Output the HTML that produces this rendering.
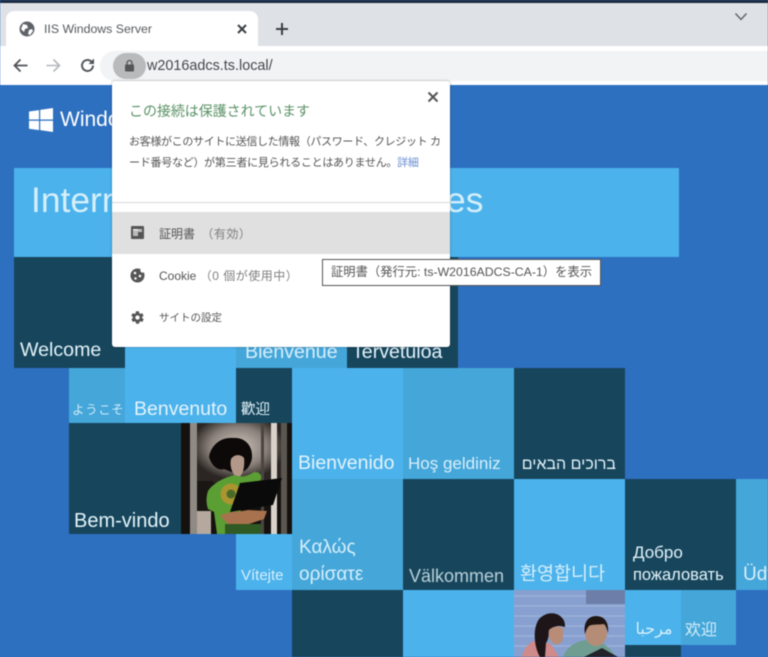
<!DOCTYPE html>
<html lang="ja"><head><meta charset="utf-8"><title>IIS Windows Server</title>
<style>
html,body{margin:0;padding:0;width:768px;height:657px;overflow:hidden;background:#2e70c0}
#r{position:relative;width:768px;height:657px;overflow:hidden;filter:blur(.55px);font-family:"Liberation Sans","Noto Sans CJK JP",sans-serif}
#r div,#r svg{position:absolute}
.t{white-space:nowrap}
.l{background:#4bb2ec}.m{background:#45a6d9}.d{background:#17465c}
.w{white-space:nowrap;color:#e4f3fa;line-height:1}
.j{color:#555;font-size:11.500px;white-space:nowrap;line-height:1}
.j span{color:#808080}
</style></head><body><div id="r">
<!-- tiles -->
<div class="l" style="left:14px;top:168px;width:665px;height:89px"></div>
<div class="w" style="left:31px;top:183px;font-size:35.400px;color:#d6effb">Internet Information Services</div>
<div class="d" style="left:14px;top:257px;width:111px;height:111px"></div>
<div class="l" style="left:125px;top:257px;width:111px;height:111px"></div>
<div class="m" style="left:236px;top:257px;width:111px;height:111px"></div>
<div class="d" style="left:347px;top:257px;width:111px;height:111px"></div>
<div class="w" style="left:20px;top:341px;font-size:19.600px">Welcome</div>
<div class="w" style="left:245px;top:343px;font-size:19.600px;color:#d6effb">Bienvenue</div>
<div class="w" style="left:352px;top:343px;font-size:19.600px">Tervetuloa</div>

<div class="m" style="left:69px;top:368px;width:56px;height:55px"></div>
<div class="l" style="left:125px;top:368px;width:111px;height:55px"></div>
<div class="d" style="left:236px;top:368px;width:56px;height:55px"></div>
<div class="l" style="left:292px;top:368px;width:111px;height:111px"></div>
<div class="m" style="left:403px;top:368px;width:111px;height:111px"></div>
<div class="d" style="left:514px;top:368px;width:111px;height:111px"></div>
<div class="w" style="left:72px;top:404px;font-size:12.500px;letter-spacing:.6px;color:#cdebfa">ようこそ</div>
<div class="w" style="left:134px;top:400px;font-size:19.500px">Benvenuto</div>
<div class="w" style="left:241px;top:403px;font-size:14.500px">歡迎</div>
<div class="w" style="left:298px;top:454px;font-size:19.500px">Bienvenido</div>
<div class="w" style="left:408px;top:455px;font-size:17px;color:#d6effb">Hoş geldiniz</div>
<div class="w" style="left:522px;top:457px;font-size:16px;direction:rtl;width:94px;text-align:right">ברוכים הבאים</div>

<div class="d" style="left:69px;top:423px;width:112px;height:111px"></div>
<div class="w" style="left:74px;top:511px;font-size:20px">Bem-vindo</div>
<svg style="left:181px;top:423px" width="111" height="111" viewBox="0 0 111 111">
<defs><radialGradient id="g" cx=".5" cy=".4" r=".55"><stop offset="0" stop-color="#cfc6be"/><stop offset=".6" stop-color="#8a817a"/><stop offset="1" stop-color="#2b2623"/></radialGradient></defs>
<rect width="111" height="111" fill="#15110f"/>
<rect x="14" width="86" height="60" fill="url(#g)"/>
<rect x="9" width="7" height="111" fill="#8f8a84"/>
<rect x="90" y="0" width="6" height="111" fill="#d8d2ca"/>
<rect x="80" y="0" width="3" height="111" fill="#4a4541"/>
<rect x="100" y="0" width="6" height="111" fill="#5c5650"/>
<rect x="16" y="58" width="16" height="30" fill="#1a1614"/>
<rect x="16" y="88" width="14" height="23" fill="#b5a99f"/>
<path d="M28 34c2-12 12-20 24-19 12-1 20 8 19 20-1 6-4 11-8 13l-10 2-10-4c-5 2-12-2-15-12z" fill="#0c0908"/>
<path d="M50 36c4-6 11-4 13-1 1 8-1 17-5 19-5 1-10-9-8-18z" fill="#b39889"/>
<path d="M27 68c6-9 18-14 27-16 7 3 13 1 19-3 6 0 8 3 7 7l-3 8-22 30 2 17H36l-3-22-6-3c-2-6-2-12 0-18z" fill="#5b9e33"/>
<circle cx="50" cy="71" r="10.500" fill="#ab9530"/><circle cx="50" cy="71" r="4.500" fill="#4a6b28"/>
<path d="M59 60l42-5-9 27-43 7z" fill="#0a0a0a"/>
<path d="M39 93c8-5 20-4 28-6l19 1-3 8-18 6-18-1z" fill="#a8724e"/>
<rect x="44" y="101" width="36" height="10" fill="#2f5a24"/>
</svg>

<div class="m" style="left:292px;top:479px;width:111px;height:111px"></div>
<div class="w" style="left:299px;top:538px;font-size:19px;color:#d6effb">Καλώς</div>
<div class="w" style="left:299px;top:565px;font-size:19px;color:#d6effb">ορίσατε</div>
<div class="l" style="left:236px;top:534px;width:56px;height:56px"></div>
<div class="w" style="left:241px;top:568px;font-size:15px;color:#d6effb">Vítejte</div>
<div class="d" style="left:403px;top:479px;width:111px;height:111px"></div>
<div class="w" style="left:409px;top:567px;font-size:18px;color:#b9d0da">Välkommen</div>
<div class="l" style="left:514px;top:479px;width:111px;height:111px"></div>
<div class="w" style="left:520px;top:565px;font-size:18.500px;color:#d6effb">환영합니다</div>
<div class="d" style="left:625px;top:479px;width:111px;height:111px"></div>
<div class="w" style="left:633px;top:544px;font-size:17px">Добро</div>
<div class="w" style="left:633px;top:567px;font-size:16.500px">пожаловать</div>
<div class="m" style="left:736px;top:479px;width:32px;height:111px"></div>
<div class="w" style="left:743px;top:565px;font-size:19px;color:#d6effb">Üdvözöljük</div>

<div class="d" style="left:292px;top:590px;width:111px;height:67px"></div>
<div class="l" style="left:403px;top:590px;width:111px;height:67px"></div>
<svg style="left:514px;top:590px" width="111" height="67" viewBox="0 0 111 67">
<rect width="111" height="67" fill="#87a0d0"/>
<path d="M0 6h111M0 16h111M0 26h111M0 36h111M0 46h111M0 56h111" stroke="#9db1d8" stroke-width="1.500"/>
<rect x="72" y="0" width="39" height="14" fill="#6d7fa8"/>
<path d="M8 67c2-10 8-15 15-17l14 4 8 13z" fill="#cf8a8a"/>
<path d="M26 67c-6-10-8-30 0-39 8-7 18-6 23 1 2 3 2 6 2 8-6-2-11-1-14 2-3 5-2 10-5 14l-1 14z" fill="#1d1517"/>
<path d="M35 40c4-4 10-4 14-2 1 7 0 15-4 16-6 2-12-5-10-14z" fill="#b98c78"/>
<path d="M49 67c3-9 12-16 24-17 14 0 24 7 28 17z" fill="#6f9e90"/>
<path d="M70 67l18-9 16 9z" fill="#23232b"/>
<ellipse cx="82" cy="43" rx="11" ry="13" fill="#b58d76"/>
<path d="M71 44c-2-11 3-18 11-18 9 0 13 7 12 17-1-4-2-7-4-9-6 1-12 0-15 2-2 2-3 5-4 8z" fill="#1f1613"/>
</svg>
<div class="l" style="left:625px;top:590px;width:56px;height:55px"></div>
<div class="m" style="left:681px;top:590px;width:55px;height:55px"></div>
<div class="w" style="left:631px;top:622px;font-size:16px;width:46px;text-align:center;color:#d6effb">مرحبا</div>
<div class="w" style="left:685px;top:623px;font-size:16px;color:#d6effb">欢迎</div>
<div class="d" style="left:625px;top:645px;width:56px;height:12px"></div>

<!-- windows logo -->
<svg style="left:28px;top:107px" width="26" height="26" viewBox="0 0 26 26"><path d="M1 4.500l10-1.400v9.400H1zM12.200 2.900L25 1v11.500H12.200zM1 13.700h10v9.400L1 21.700zM12.200 13.700H25V25l-12.800-1.900z" fill="#fff"/></svg>
<div class="w" style="left:60px;top:109px;font-size:21px;color:#fff">Windows Server</div>

<!-- chrome -->
<div style="left:0;top:0;width:768px;height:46px;background:#dee1e6"></div>
<div style="left:0;top:0;width:768px;height:3px;background:#1c2a3f"></div>
<div style="left:6px;top:11px;width:252px;height:36px;background:#fff;border-radius:8px 8px 0 0"></div>
<svg style="left:19px;top:21px" width="16" height="16" viewBox="0 0 16 16"><circle cx="8" cy="8" r="7.500" fill="#5f6368"/><path d="M4 3l4 1 1 3-3 1-1 3-3-3zM10 9l3-1 1 2-3 4-2-1z" fill="#fff"/></svg>
<div class="t" style="left:44px;top:22px;font-size:12.300px;line-height:15px;color:#55585c">IIS Windows Server</div>
<svg style="left:236px;top:23px" width="12" height="12" viewBox="0 0 12 12"><path d="M2 2l8 8M10 2l-8 8" stroke="#3c4043" stroke-width="2"/></svg>
<svg style="left:275px;top:22px" width="14" height="14" viewBox="0 0 14 14"><path d="M7 1v12M1 7h12" stroke="#3c4043" stroke-width="2"/></svg>
<svg style="left:734px;top:12px" width="14" height="10" viewBox="0 0 14 10"><path d="M1.500 1.500l5.500 6 5.500-6" fill="none" stroke="#5f6368" stroke-width="1.400"/></svg>
<div style="left:0;top:46px;width:768px;height:39px;background:#fff"></div>
<div style="left:100px;top:51px;width:668px;height:30px;background:#f1f3f4;border-radius:15px 0 0 15px"></div>
<svg style="left:12px;top:57px" width="17" height="17" viewBox="0 0 17 17"><path d="M15.500 8.500H2.500M8.500 2.500l-6 6 6 6" fill="none" stroke="#505357" stroke-width="1.800"/></svg>
<svg style="left:45px;top:57px" width="17" height="17" viewBox="0 0 17 17"><path d="M1.500 8.500h13M8.500 2.500l6 6-6 6" fill="none" stroke="#b4b7bb" stroke-width="1.600"/></svg>
<svg style="left:79px;top:57px" width="17" height="17" viewBox="0 0 17 17"><path d="M14 8.500a5.500 5.500 0 1 1-1.700-4" fill="none" stroke="#505357" stroke-width="1.900"/><path d="M15 1.500v5.500h-5.500z" fill="#505357"/></svg>
<div style="left:113px;top:53px;width:33px;height:26px;background:#b9babc;border-radius:13px"></div>
<svg style="left:124px;top:59px" width="11" height="13" viewBox="0 0 11 13"><path d="M3 6V4a2.500 2.500 0 0 1 5 0v2" fill="none" stroke="#555" stroke-width="1.300"/><rect x="1" y="5.500" width="9" height="7" rx="1" fill="#555"/></svg>
<div class="t" style="left:147px;top:57px;font-size:14.400px;line-height:18px;color:#45484c">w2016adcs.ts.local/</div>

<!-- popup -->
<div style="left:112px;top:81px;width:338px;height:266px;background:#fff;border-radius:3px;box-shadow:0 0 2px rgba(0,0,0,.4)"></div>
<svg style="left:427px;top:91px" width="12" height="12" viewBox="0 0 12 12"><path d="M1.500 1.500l9 9M10.500 1.500l-9 9" stroke="#555" stroke-width="2"/></svg>
<div class="t" style="left:129px;top:102px;font-size:14px;line-height:18px;color:#5a9266;letter-spacing:-.05px">この接続は保護されています</div>
<div class="t" style="left:129px;top:135px;font-size:11px;line-height:15px;color:#555;letter-spacing:-.33px">お客様がこのサイトに送信した情報（パスワード、クレジット カ</div>
<div class="t" style="left:129px;top:156px;font-size:11px;line-height:15px;color:#555;letter-spacing:-.26px">ード番号など）が第三者に見られることはありません。<span style="color:#6a8ed2">詳細</span></div>
<div style="left:112px;top:202px;width:338px;height:1px;background:#d8d8d8"></div>
<div style="left:112px;top:212px;width:338px;height:42px;background:#e0e0e0"></div>
<svg style="left:131px;top:226px" width="13" height="13" viewBox="0 0 13 13"><rect width="13" height="13" rx="1" fill="#555"/><rect x="2" y="3" width="9" height="7" fill="#bbb"/><rect x="7" y="6" width="4" height="5" fill="#555"/><rect x="2" y="3" width="5" height="1.500" fill="#eee"/></svg>
<div class="j" style="left:159px;top:228px;font-size:12px">証明書 <span style="margin-left:3px;letter-spacing:.5px">（有効）</span></div>
<svg style="left:130px;top:268px" width="15" height="15" viewBox="0 0 15 15"><circle cx="7.500" cy="7.500" r="7" fill="#555"/><circle cx="5" cy="5" r="1.300" fill="#fff"/><circle cx="10" cy="8" r="1.300" fill="#fff"/><circle cx="5.500" cy="10.500" r="1.200" fill="#fff"/><circle cx="12.500" cy="2.500" r="2.200" fill="#fff"/></svg>
<div class="j" style="left:159px;top:270px;font-size:12px">Cookie <span style="letter-spacing:.5px">（0 個が使用中）</span></div>
<svg style="left:130px;top:310px" width="15" height="15" viewBox="0 0 24 24"><path fill="#555" d="M19.400 13c.1-.3.100-.7.100-1s0-.7-.1-1l2.100-1.600c.2-.2.200-.4.100-.6l-2-3.500c-.1-.2-.4-.3-.6-.2l-2.500 1c-.5-.4-1.100-.7-1.700-1l-.4-2.700c0-.2-.2-.4-.5-.4h-4c-.2 0-.4.200-.5.400l-.4 2.700c-.6.300-1.200.6-1.700 1l-2.500-1c-.2-.1-.5 0-.6.200l-2 3.500c-.1.200-.1.500.1.600L4.600 11c-.1.300-.1.700-.1 1s0 .7.100 1l-2.100 1.600c-.2.200-.2.400-.1.600l2 3.500c.1.200.4.300.6.200l2.500-1c.5.400 1.100.7 1.700 1l.4 2.700c0 .2.200.4.500.4h4c.2 0 .4-.2.500-.4l.4-2.700c.6-.3 1.200-.6 1.700-1l2.500 1c.2.100.5 0 .6-.2l2-3.500c.1-.2.100-.5-.1-.6zM12 15.500a3.500 3.500 0 1 1 0-7 3.500 3.500 0 0 1 0 7z"/></svg>
<div class="j" style="left:159px;top:313px;font-size:10.500px">サイトの設定</div>

<!-- tooltip -->
<div style="left:322px;top:259px;width:277px;height:25px;background:#fff;border:1px solid #555"></div>
<div class="t" style="left:331px;top:265px;font-size:12.300px;line-height:14px;color:#555">証明書（発行元: ts-W2016ADCS-CA-1）を表示</div>
</div></body></html>
